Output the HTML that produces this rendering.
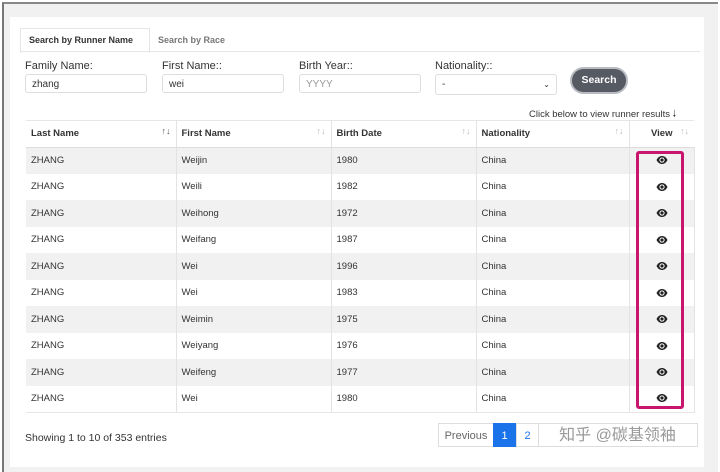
<!DOCTYPE html><html><head><style>
body{margin:0;width:720px;height:465px;background:#fff;font-family:"Liberation Sans",Arial,sans-serif;position:relative;overflow:hidden;color:#333}
.a{position:absolute}
.frame{left:2px;top:2px;width:716px;height:470px;border-left:2px solid #777;border-top:2px solid #888;box-sizing:border-box;background:#f1f1f1}
.panel{left:10px;top:17px;width:694px;height:450px;background:#fff}
.tab{font-size:9px;font-weight:bold;}
.lbl{font-size:11px;color:#333}
.inp{height:19px;border:1px solid #ddd;border-radius:3px;font-size:10px;line-height:19px;padding-left:6px;box-sizing:border-box}
table{position:absolute;left:26px;top:120px;border-collapse:collapse;font-size:9.5px}
td,th{border-right:1px solid #e3e3e3;padding:0 5px;text-align:left;height:26.5px;box-sizing:border-box}
th{font-weight:bold;font-size:9.5px;position:relative;border-top:1px solid #e6e6e6;border-bottom:1px solid #ddd}
th span{position:absolute;right:5px;top:5px;color:#bbb;font-size:9px;font-weight:normal}
tr:nth-child(even) td{background:#f1f1f1}
td.v{text-align:center}
td.v svg{display:inline-block;vertical-align:middle}
tr:last-child td{border-bottom:1px solid #e6e6e6}
.pg{top:423px;height:24px;border:1px solid #ddd;font-size:11px;line-height:24px;text-align:center;box-sizing:border-box;color:#666}
</style></head><body>
<div class="a frame"></div>
<div class="a panel"></div>
<div class="a" style="left:20px;top:28px;width:128px;height:24px;border:1px solid #e6e6e6;border-bottom:none;background:#fff"></div>
<div class="a" style="left:20px;top:51px;width:680px;border-top:1px solid #e6e6e6"></div>
<div class="a tab" style="left:29px;top:35px;color:#333">Search by Runner Name</div>
<div class="a tab" style="left:158px;top:35px;color:#777">Search by Race</div>
<div class="a lbl" style="left:25px;top:60px">Family Name:</div>
<div class="a lbl" style="left:162px;top:60px">First Name::</div>
<div class="a lbl" style="left:299px;top:60px">Birth Year::</div>
<div class="a lbl" style="left:435px;top:60px">Nationality::</div>
<div class="a inp" style="left:25px;top:74px;width:122px">zhang</div>
<div class="a inp" style="left:162px;top:74px;width:122px">wei</div>
<div class="a inp" style="left:299px;top:74px;width:122px;color:#999">YYYY</div>
<div class="a inp" style="left:435px;top:74px;width:122px;height:21px">-<span style="position:absolute;right:6px;font-size:8px">&#8964;</span></div>
<div class="a" style="left:570px;top:67px;width:58px;height:27px;border-radius:14px;background:#555a63;border:2px solid #b8bcc2;box-sizing:border-box;color:#fff;font-weight:bold;font-size:10.5px;text-align:center;line-height:23px">Search</div>
<div class="a" style="left:529px;top:107px;font-size:9.5px">Click below to view runner results &#129043;</div>
<table>
<tr><th style="width:150px">Last Name<span style="color:#555">↑↓</span></th><th style="width:155px">First Name<span>↑↓</span></th><th style="width:145px">Birth Date<span>↑↓</span></th><th style="width:153px">Nationality<span>↑↓</span></th><th style="width:65px;text-align:center;border-right:none">View<span>↑↓</span></th></tr>
<tr><td>ZHANG</td><td>Weijin</td><td>1980</td><td>China</td><td class="v"><svg width="12" height="8" viewBox="0 0 12 8"><path d="M0.5 4C2 1 4 0 6 0s4 1 5.5 4C10 7 8 8 6 8S2 7 .5 4z" fill="#222"/><circle cx="6" cy="4" r="2.6" fill="#fff"/><circle cx="6" cy="4" r="1.6" fill="#222"/></svg></td></tr>
<tr><td>ZHANG</td><td>Weili</td><td>1982</td><td>China</td><td class="v"><svg width="12" height="8" viewBox="0 0 12 8"><path d="M0.5 4C2 1 4 0 6 0s4 1 5.5 4C10 7 8 8 6 8S2 7 .5 4z" fill="#222"/><circle cx="6" cy="4" r="2.6" fill="#fff"/><circle cx="6" cy="4" r="1.6" fill="#222"/></svg></td></tr>
<tr><td>ZHANG</td><td>Weihong</td><td>1972</td><td>China</td><td class="v"><svg width="12" height="8" viewBox="0 0 12 8"><path d="M0.5 4C2 1 4 0 6 0s4 1 5.5 4C10 7 8 8 6 8S2 7 .5 4z" fill="#222"/><circle cx="6" cy="4" r="2.6" fill="#fff"/><circle cx="6" cy="4" r="1.6" fill="#222"/></svg></td></tr>
<tr><td>ZHANG</td><td>Weifang</td><td>1987</td><td>China</td><td class="v"><svg width="12" height="8" viewBox="0 0 12 8"><path d="M0.5 4C2 1 4 0 6 0s4 1 5.5 4C10 7 8 8 6 8S2 7 .5 4z" fill="#222"/><circle cx="6" cy="4" r="2.6" fill="#fff"/><circle cx="6" cy="4" r="1.6" fill="#222"/></svg></td></tr>
<tr><td>ZHANG</td><td>Wei</td><td>1996</td><td>China</td><td class="v"><svg width="12" height="8" viewBox="0 0 12 8"><path d="M0.5 4C2 1 4 0 6 0s4 1 5.5 4C10 7 8 8 6 8S2 7 .5 4z" fill="#222"/><circle cx="6" cy="4" r="2.6" fill="#fff"/><circle cx="6" cy="4" r="1.6" fill="#222"/></svg></td></tr>
<tr><td>ZHANG</td><td>Wei</td><td>1983</td><td>China</td><td class="v"><svg width="12" height="8" viewBox="0 0 12 8"><path d="M0.5 4C2 1 4 0 6 0s4 1 5.5 4C10 7 8 8 6 8S2 7 .5 4z" fill="#222"/><circle cx="6" cy="4" r="2.6" fill="#fff"/><circle cx="6" cy="4" r="1.6" fill="#222"/></svg></td></tr>
<tr><td>ZHANG</td><td>Weimin</td><td>1975</td><td>China</td><td class="v"><svg width="12" height="8" viewBox="0 0 12 8"><path d="M0.5 4C2 1 4 0 6 0s4 1 5.5 4C10 7 8 8 6 8S2 7 .5 4z" fill="#222"/><circle cx="6" cy="4" r="2.6" fill="#fff"/><circle cx="6" cy="4" r="1.6" fill="#222"/></svg></td></tr>
<tr><td>ZHANG</td><td>Weiyang</td><td>1976</td><td>China</td><td class="v"><svg width="12" height="8" viewBox="0 0 12 8"><path d="M0.5 4C2 1 4 0 6 0s4 1 5.5 4C10 7 8 8 6 8S2 7 .5 4z" fill="#222"/><circle cx="6" cy="4" r="2.6" fill="#fff"/><circle cx="6" cy="4" r="1.6" fill="#222"/></svg></td></tr>
<tr><td>ZHANG</td><td>Weifeng</td><td>1977</td><td>China</td><td class="v"><svg width="12" height="8" viewBox="0 0 12 8"><path d="M0.5 4C2 1 4 0 6 0s4 1 5.5 4C10 7 8 8 6 8S2 7 .5 4z" fill="#222"/><circle cx="6" cy="4" r="2.6" fill="#fff"/><circle cx="6" cy="4" r="1.6" fill="#222"/></svg></td></tr>
<tr><td>ZHANG</td><td>Wei</td><td>1980</td><td>China</td><td class="v"><svg width="12" height="8" viewBox="0 0 12 8"><path d="M0.5 4C2 1 4 0 6 0s4 1 5.5 4C10 7 8 8 6 8S2 7 .5 4z" fill="#222"/><circle cx="6" cy="4" r="2.6" fill="#fff"/><circle cx="6" cy="4" r="1.6" fill="#222"/></svg></td></tr>
</table>
<div class="a" style="left:636px;top:151px;width:48px;height:258px;border:3px solid #c8166e;border-radius:3px;box-sizing:border-box"></div>
<div class="a" style="left:25px;top:432px;font-size:10.5px">Showing 1 to 10 of 353 entries</div>
<div class="a pg" style="left:438px;width:56px">Previous</div>
<div class="a pg" style="left:493px;width:23px;background:#1a73e8;color:#fff;border-color:#1a73e8">1</div>
<div class="a pg" style="left:516px;width:23px;color:#1a73e8">2</div>
<div class="a pg" style="left:538px;width:160px;color:#999;font-family:'Liberation Sans','Noto Sans CJK SC',sans-serif;font-size:16px;border-left:none">知乎 @碳基领袖</div>
</body></html>
